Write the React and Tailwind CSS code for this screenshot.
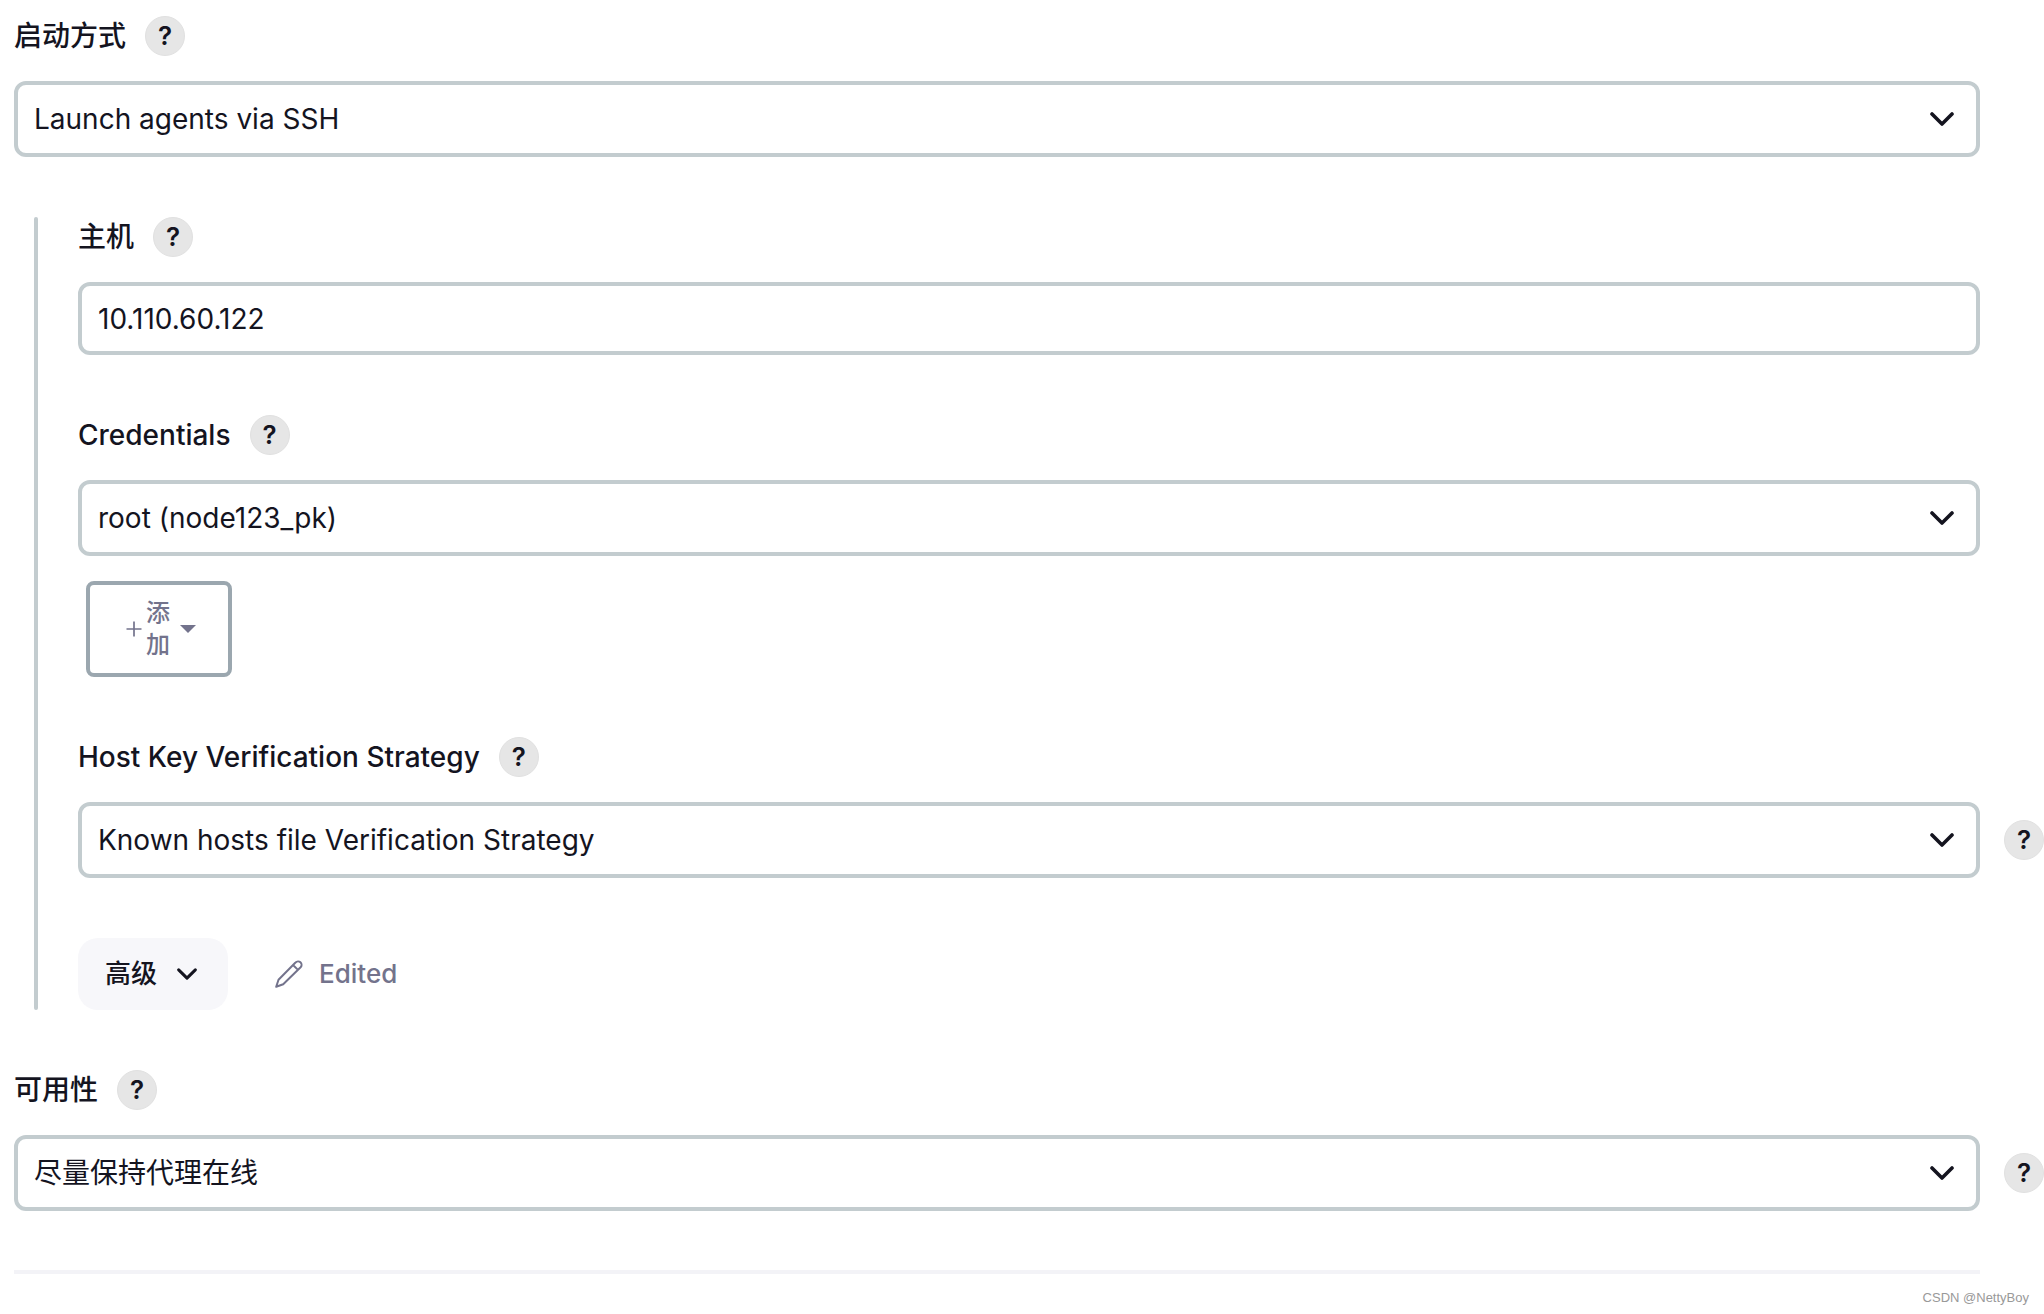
import React from "react";

function HelpButton({ label }) {
  return (
    <button
      type="button"
      aria-label={`Help for ${label}`}
      className="flex size-10 shrink-0 items-center justify-center rounded-full border border-[#e1e1e1] bg-[#e6e6e6] text-[26px] leading-8 font-semibold"
    >
      ?
    </button>
  );
}

function Chevron({ className }) {
  return (
    <svg viewBox="0 0 24 14" fill="none" stroke="currentColor" strokeLinecap="round" strokeLinejoin="round" className={className} aria-hidden="true">
      <path d="M2 2l10 10L22 2" strokeWidth="3.6" />
    </svg>
  );
}

// label on top, control below, optional second help button in the right gutter
function Field({ id, label, sideHelp, extra, children }) {
  return (
    <div>
      <div className="mb-[25px] flex items-center gap-[19px]">
        <label htmlFor={id} className="text-[28px] leading-10 font-medium">{label}</label>
        <HelpButton label={label} />
      </div>
      <div className="grid grid-cols-[minmax(0,1fr)_40px] items-center gap-x-6">
        {children}
        {sideHelp && <HelpButton label={sideHelp} />}
      </div>
      {extra}
    </div>
  );
}

function Select({ id, options }) {
  return (
    <div className="relative">
      <select
        id={id}
        className="block h-[76px] w-full appearance-none rounded-xl border-4 border-[#c3cccf] bg-white pr-16 pl-4 text-[28px] leading-10"
      >
        {options.map((option) => (
          <option key={option}>{option}</option>
        ))}
      </select>
      <Chevron className="pointer-events-none absolute top-[31px] right-[26px] h-[14px] w-6" />
    </div>
  );
}

export default function App() {
  return (
    <div className="bg-white pt-4 pl-[14px] font-['Inter','Noto_Sans_CJK_SC',sans-serif] text-[#14141f]">
      <form className="flex flex-col gap-[60px]">
        <Field id="launcher" label="启动方式">
          <Select id="launcher" options={["Launch agents via SSH"]} />
        </Field>

        <div className="ml-5 flex">
          <div className="w-1 shrink-0 rounded-full bg-[#c3cccf]" />
          <div className="ml-10 flex min-w-0 flex-1 flex-col gap-[60px]">
            <Field id="host" label="主机">
              <input
                id="host"
                type="text"
                defaultValue="10.110.60.122"
                className="block h-[73px] w-full rounded-xl border-4 border-[#c3cccf] bg-white px-4 text-[28px] leading-10"
              />
            </Field>

            <Field
              id="credentials"
              label="Credentials"
              extra={
                <button
                  type="button"
                  className="mt-[25px] ml-2 flex h-24 w-[146px] items-center rounded-lg border-4 border-[#9ba7af] pl-9 text-2xl leading-8 font-medium text-[#73738c]"
                >
                  <svg viewBox="0 0 16 16" className="mr-1 size-4 shrink-0" stroke="currentColor" strokeWidth="1.7" aria-hidden="true">
                    <path d="M8 0.5v15M0.5 8h15" />
                  </svg>
                  <span className="w-6">添加</span>
                  <svg viewBox="0 0 16 8" className="ml-[10px] h-2 w-4 shrink-0" fill="currentColor" aria-hidden="true">
                    <path d="M0 0h16L8 8z" />
                  </svg>
                </button>
              }
            >
              <Select id="credentials" options={["root (node123_pk)"]} />
            </Field>

            <Field id="strategy" label="Host Key Verification Strategy" sideHelp="Known hosts file Verification Strategy">
              <Select id="strategy" options={["Known hosts file Verification Strategy"]} />
            </Field>

            <div className="flex items-center">
              <button type="button" className="flex h-[72px] w-[150px] items-center gap-5 rounded-[20px] bg-[#f7f7fa] pl-[27px] text-[26px] leading-8 font-medium">
                高级
                <Chevron className="h-3 w-5" />
              </button>
              <div className="ml-[47px] flex items-center gap-4 text-[26px] leading-8 font-medium text-[#73738c]">
                <svg viewBox="0 0 28 28" className="size-7" fill="none" stroke="currentColor" strokeWidth="2" strokeLinecap="round" strokeLinejoin="round" aria-hidden="true">
                  <path d="M20.500 2.500 3.500 19.700 1.200 26.800l7-2.600L25.600 7.300a3.400 3.400 0 0 0-5.100-4.800zM18 5l5 4.900" />
                </svg>
                Edited
              </div>
            </div>
          </div>
        </div>

        <Field id="availability" label="可用性" sideHelp="尽量保持代理在线">
          <Select id="availability" options={["尽量保持代理在线"]} />
        </Field>
      </form>

      <hr className="mt-[59px] mr-16 border-t-4 border-[#f3f3f7]" />
      <p className="mt-3 pr-[15px] text-right font-['Liberation_Sans',sans-serif] text-[13px] leading-6 text-[#999999]">CSDN @NettyBoy</p>
    </div>
  );
}
